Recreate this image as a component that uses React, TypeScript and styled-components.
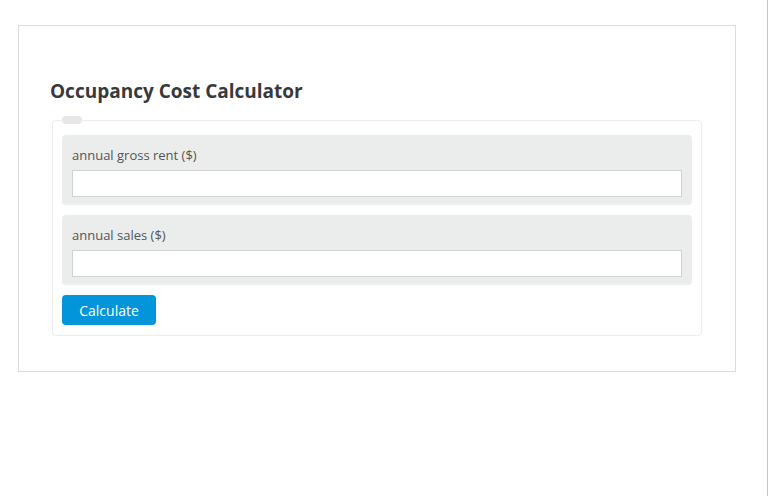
import styled, { createGlobalStyle } from 'styled-components';

const GlobalStyle = createGlobalStyle`
  html, body {
    margin: 0;
    padding: 0;
    background: #fff;
  }
  * {
    box-sizing: border-box;
  }
`;

const Page = styled.div`
  min-height: 100vh;
  padding: 25px 0 0 18px;
  border-right: 1px solid #c6c6c6;
  font-family: "Open Sans", "Noto Sans", sans-serif;
`;

const Card = styled.div`
  width: 718px;
  height: 347px;
  border: 1px solid #dcdcdc;
  padding: 52px 33px 0 33px;
`;

const Title = styled.h2`
  margin: 0 0 12px -2px;
  font-size: 19px;
  line-height: 26px;
  font-weight: 700;
  color: #373a3c;
`;

const Fieldset = styled.fieldset`
  margin: 0;
  padding: 11px 9px 10px;
  border: 1px solid #ececec;
  border-radius: 4px;
  display: flex;
  flex-direction: column;
  gap: 10px;
`;

const Legend = styled.legend`
  width: 20px;
  height: 8px;
  padding: 0;
  margin-left: 0;
  background: #e6e6e6;
  border-radius: 4px;
`;

const Group = styled.div`
  background: #ebecec;
  border-radius: 4px;
  padding: 11px 10px 8px;
  display: flex;
  flex-direction: column;
  gap: 5px;
`;

const Label = styled.label`
  font-size: 13px;
  line-height: 19px;
  color: #555;
`;

const Input = styled.input`
  height: 27px;
  width: 100%;
  border: 1px solid #d2d2d2;
  background: #fff;
  padding: 0 6px;
  font: inherit;
`;

const Button = styled.button`
  align-self: flex-start;
  width: 94px;
  height: 30px;
  border: none;
  border-radius: 4px;
  background: #0395d9;
  color: #fff;
  font-family: inherit;
  font-size: 14px;
  cursor: pointer;
`;

const FIELDS = ['annual gross rent ($)', 'annual sales ($)'];

export default function App() {
  return (
    <>
      <GlobalStyle />
      <Page>
        <Card>
          <Title>Occupancy Cost Calculator</Title>
          <Fieldset>
            <Legend />
            {FIELDS.map(label => (
              <Group key={label}>
                <Label>{label}</Label>
                <Input type="text" />
              </Group>
            ))}
            <Button>Calculate</Button>
          </Fieldset>
        </Card>
      </Page>
    </>
  );
}
